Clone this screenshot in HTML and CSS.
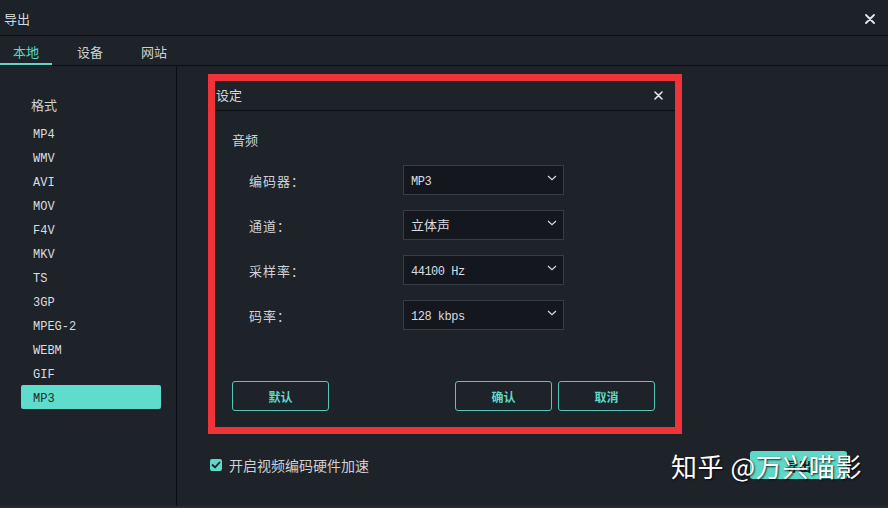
FILE: index.html
```html
<!DOCTYPE html>
<html lang="zh-CN">
<head>
<meta charset="utf-8">
<title>导出</title>
<link rel="stylesheet" href="styles.css">
</head>
<body>
<div class="window">
  <div class="titlebar">
    <span class="title">导出</span>
    <svg class="close" width="10" height="10" viewBox="0 0 10 10"><path d="M1 1L9 9M9 1L1 9" stroke="#e6e8ea" stroke-width="1.8" stroke-linecap="round"/></svg>
  </div>
  <div class="tabs">
    <div class="tab active">本地</div>
    <div class="tab">设备</div>
    <div class="tab">网站</div>
  </div>
  <div class="body">
    <aside class="sidebar">
      <div class="heading">格式</div>
      <ul class="formats">
        <li>MP4</li><li>WMV</li><li>AVI</li><li>MOV</li><li>F4V</li><li>MKV</li>
        <li>TS</li><li>3GP</li><li>MPEG-2</li><li>WEBM</li><li>GIF</li>
        <li class="selected">MP3</li>
      </ul>
    </aside>
    <main class="main">
      <div class="footer">
        <label class="check">
          <span class="box"><svg width="10" height="8" viewBox="0 0 10 8"><path d="M1.5 4L4 6.3L8.5 1.5" stroke="#1b2027" stroke-width="1.8" fill="none" stroke-linecap="round" stroke-linejoin="round"/></svg></span>
          <span>开启视频编码硬件加速</span>
        </label>
        <button class="export">导出</button>
      </div>
    </main>
  </div>

  <div class="dialog">
    <div class="dlg-head">
      <span class="dlg-title">设定</span>
      <svg class="dlg-close" width="9" height="9" viewBox="0 0 9 9"><path d="M1 1L8 8M8 1L1 8" stroke="#e6e8ea" stroke-width="1.6" stroke-linecap="round"/></svg>
    </div>
    <div class="dlg-body">
      <div class="section">音频</div>
      <div class="rows">
        <div class="row"><span class="label">编码器：</span><div class="select mono"><span class="val">MP3</span><svg class="chev" width="10" height="6" viewBox="0 0 10 6"><path d="M1 1L5 4.6L9 1" stroke="#d8dbde" stroke-width="1.2" fill="none"/></svg></div></div>
        <div class="row"><span class="label">通道：</span><div class="select"><span class="val">立体声</span><svg class="chev" width="10" height="6" viewBox="0 0 10 6"><path d="M1 1L5 4.6L9 1" stroke="#d8dbde" stroke-width="1.2" fill="none"/></svg></div></div>
        <div class="row"><span class="label">采样率：</span><div class="select mono"><span class="val">44100 Hz</span><svg class="chev" width="10" height="6" viewBox="0 0 10 6"><path d="M1 1L5 4.6L9 1" stroke="#d8dbde" stroke-width="1.2" fill="none"/></svg></div></div>
        <div class="row"><span class="label">码率：</span><div class="select mono"><span class="val">128 kbps</span><svg class="chev" width="10" height="6" viewBox="0 0 10 6"><path d="M1 1L5 4.6L9 1" stroke="#d8dbde" stroke-width="1.2" fill="none"/></svg></div></div>
      </div>
      <div class="buttons">
        <button class="btn">默认</button>
        <div class="btn-group">
          <button class="btn">确认</button>
          <button class="btn">取消</button>
        </div>
      </div>
    </div>
  </div>

  <div class="watermark">知乎 @万兴喵影</div>
</div>
</body>
</html>
```

FILE: styles.css
```css
* { box-sizing: border-box; }
html, body { margin: 0; padding: 0; }
body {
  width: 888px;
  height: 508px;
  overflow: hidden;
  background: #1e2229;
  font-family: "Noto Sans CJK SC", "Noto Sans", sans-serif;
  color: #d4d8db;
}
.window {
  position: relative;
  width: 888px;
  height: 508px;
  background: #1e2229;
  display: flex;
  flex-direction: column;
  border-bottom: 2px solid #272b32;
}
.titlebar {
  height: 36px;
  flex: none;
  display: flex;
  align-items: center;
  justify-content: space-between;
  padding: 2px 13px 0 4px;
  border-bottom: 1px solid #0b0d10;
  background: #1d2128;
}
.title { font-size: 13px; color: #d6d9dc; line-height: 18px; }
.close { display: block; }
.tabs {
  height: 30px;
  flex: none;
  display: flex;
  gap: 12px;
  border-bottom: 1px solid #0b0d10;
}
.tab {
  padding: 4px 13px 0;
  font-size: 13px;
  line-height: 23px;
  color: #cdd1d4;
  border-bottom: 2px solid transparent;
  height: 29px;
}
.tab.active { color: #5fd8c7; border-bottom-color: #5fd8c7; }
.body { flex: 1; display: flex; min-height: 0; }
.sidebar {
  width: 177px;
  flex: none;
  border-right: 1px solid #0b0d10;
  padding: 28px 15px 0 21px;
}
.heading {
  font-size: 13px;
  line-height: 22px;
  height: 22px;
  margin: 0 0 5px 10px;
  color: #cfd3d6;
}
.formats { list-style: none; margin: 0; padding: 0; }
.formats li {
  height: 24px;
  line-height: 19px;
  padding: 5px 0 0 12px;
  font-family: "Liberation Mono", "DejaVu Sans Mono", monospace;
  font-size: 12px;
  color: #dadde0;
  border-radius: 2px;
}
.formats li.selected { background: #5fdccb; color: #1a2a2b; }
.main {
  flex: 1;
  display: flex;
  flex-direction: column;
  justify-content: flex-end;
  padding: 0 41px 27px 33px;
}
.footer { display: flex; align-items: center; justify-content: space-between; }
.check { display: flex; align-items: center; gap: 7px; font-size: 14px; color: #cdd1d4; }
.box {
  width: 12px; height: 12px;
  background: #5fd8c7;
  border-radius: 2px;
  display: flex; align-items: center; justify-content: center;
}
.export {
  width: 97px;
  height: 28px;
  border: none;
  border-radius: 3px;
  background: #5fd8c7;
  color: #16202a;
  font-family: "Noto Sans CJK SC", sans-serif;
  font-weight: bold;
  font-size: 13px;
}
.dialog {
  position: absolute;
  left: 208px;
  top: 74px;
  width: 474px;
  height: 360px;
  border: 7px solid #ee3339;
  background: #1e2229;
  display: flex;
  flex-direction: column;
}
.dlg-head {
  height: 30px;
  flex: none;
  display: flex;
  align-items: center;
  justify-content: space-between;
  padding: 0 12px 3px 1px;
  border-bottom: 1px solid #0b0d10;
}
.dlg-title { font-size: 13px; color: #d6d9dc; }
.dlg-close { display: block; margin-top: 2px; }
.dlg-body {
  flex: 1;
  display: flex;
  flex-direction: column;
  padding: 20px 20px 16px 17px;
}
.section { font-size: 13px; line-height: 18px; color: #cfd3d6; }
.rows { display: flex; flex-direction: column; gap: 15px; margin-top: 16px; }
.row { display: flex; align-items: center; height: 30px; }
.label {
  width: 171px;
  padding-left: 17px;
  font-size: 13px;
  color: #cfd3d6;
  letter-spacing: 1px;
}
.select {
  width: 161px;
  height: 30px;
  background: #14171d;
  border: 1px solid #383d45;
  display: flex;
  align-items: center;
  justify-content: space-between;
  padding: 0 6px 1px 7px;
  font-size: 13px;
  color: #dadde0;
}
.select.mono { font-family: "Liberation Mono", "DejaVu Sans Mono", monospace; font-size: 12px; letter-spacing: -0.5px; }
.select.mono .val { padding-top: 5px; }
.chev { display: block; margin-top: -3px; }
.buttons {
  margin-top: auto;
  display: flex;
  justify-content: space-between;
}
.btn-group { display: flex; gap: 6px; }
.btn {
  width: 97px;
  height: 30px;
  background: transparent;
  border: 1px solid #58c6b7;
  border-radius: 3px;
  color: #5fd8c7;
  font-family: "Noto Sans CJK SC", sans-serif;
  font-weight: bold;
  font-size: 12px;
}
.watermark {
  position: absolute;
  left: 671px;
  top: 447px;
  font-size: 26px;
  line-height: 38px;
  letter-spacing: 0.6px;
  color: #ffffff;
  text-shadow: 1px 1px 2px rgba(0,0,0,0.8);
  white-space: nowrap;
}
```
